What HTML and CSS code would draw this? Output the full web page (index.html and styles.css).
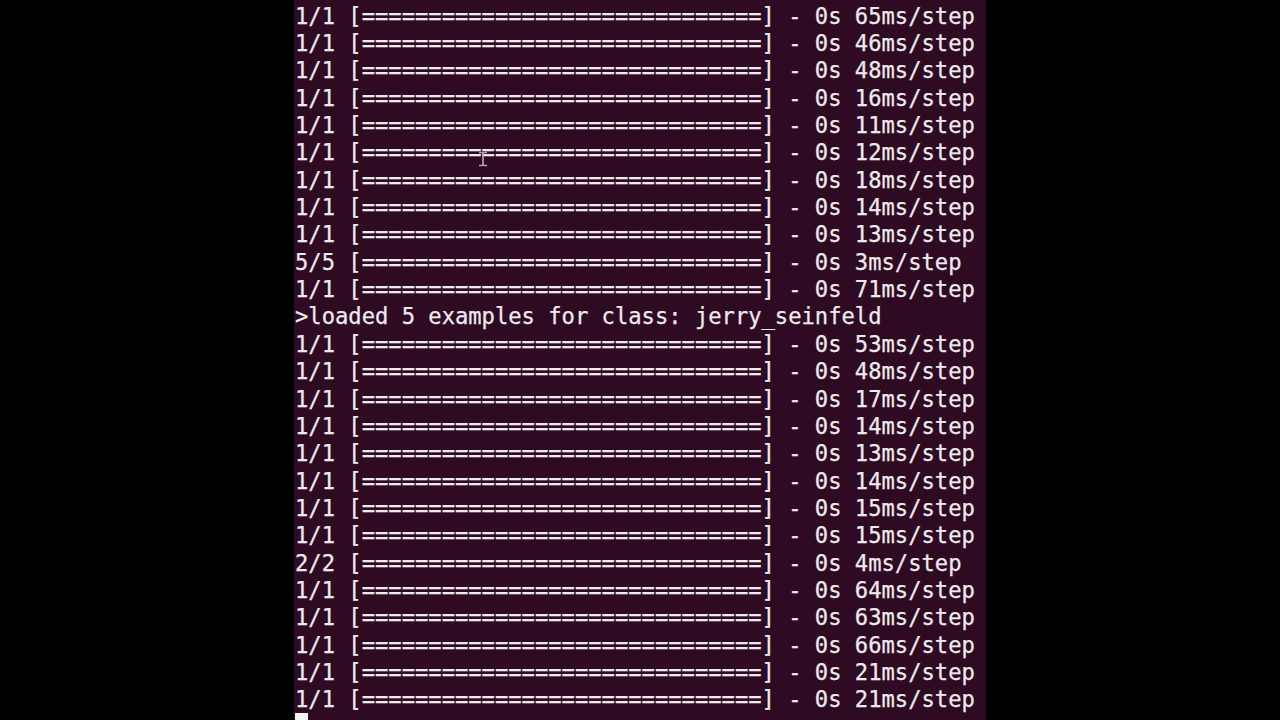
FILE: index.html
```html
<!DOCTYPE html>
<html>
<head>
<meta charset="utf-8">
<link rel="stylesheet" href="styles.css">
</head>
<body>
<div class="stage">
  <div class="terminal">
<pre class="output">1/1 [==============================] - 0s 65ms/step
1/1 [==============================] - 0s 46ms/step
1/1 [==============================] - 0s 48ms/step
1/1 [==============================] - 0s 16ms/step
1/1 [==============================] - 0s 11ms/step
1/1 [==============================] - 0s 12ms/step
1/1 [==============================] - 0s 18ms/step
1/1 [==============================] - 0s 14ms/step
1/1 [==============================] - 0s 13ms/step
5/5 [==============================] - 0s 3ms/step
1/1 [==============================] - 0s 71ms/step
>loaded 5 examples for class: jerry_seinfeld
1/1 [==============================] - 0s 53ms/step
1/1 [==============================] - 0s 48ms/step
1/1 [==============================] - 0s 17ms/step
1/1 [==============================] - 0s 14ms/step
1/1 [==============================] - 0s 13ms/step
1/1 [==============================] - 0s 14ms/step
1/1 [==============================] - 0s 15ms/step
1/1 [==============================] - 0s 15ms/step
2/2 [==============================] - 0s 4ms/step
1/1 [==============================] - 0s 64ms/step
1/1 [==============================] - 0s 63ms/step
1/1 [==============================] - 0s 66ms/step
1/1 [==============================] - 0s 21ms/step
1/1 [==============================] - 0s 21ms/step
<span class="cursor"> </span></pre>
    <svg class="ibeam" width="10" height="16" viewBox="0 0 10 16" aria-hidden="true">
      <path d="M1 1.5h3l1 1 1-1h3M5 2.5v11M1 14.5h3l1-1 1 1h3" fill="none" stroke="#b3a7b0" stroke-width="1.6"/>
    </svg>
  </div>
</div>
</body>
</html>
```
FILE: styles.css
```css
html, body {
  margin: 0;
  padding: 0;
  background: #000;
  width: 1280px;
  height: 720px;
  overflow: hidden;
}
.stage {
  display: flex;
  justify-content: center;
  height: 720px;
}
.terminal {
  position: relative;
  width: 692px;
  height: 720px;
  background: #2e0a23;
  overflow: hidden;
}
.output {
  margin: 0;
  padding: 2.5px 0 0 1px;
  font-family: "DejaVu Sans Mono", monospace;
  font-size: 22.15px;
  line-height: 27.36px;
  color: #eeeaec;
  white-space: pre;
  -webkit-text-stroke: 0.25px #eeeaec;
}
.cursor {
  display: inline-block;
  width: 13px;
  height: 26px;
  background: #f4f4f4;
  vertical-align: top;
  margin-top: -1px;
}
.ibeam {
  position: absolute;
  left: 184px;
  top: 151px;
}
```
